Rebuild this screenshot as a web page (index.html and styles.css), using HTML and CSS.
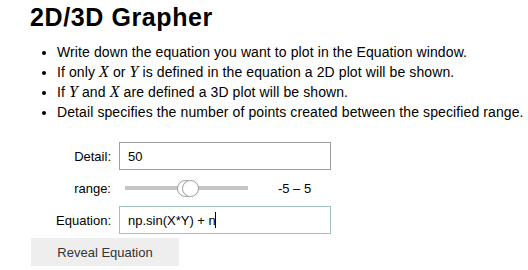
FILE: index.html
```html
<!DOCTYPE html>
<html lang="en">
<head>
    <meta charset="UTF-8">
    <meta name="viewport" content="width=device-width, initial-scale=1.0">
    <title>2D/3D Grapher</title>
    <link rel="stylesheet" href="styles.css">
</head>
<body>
    <div class="output">
        <h1 class="title">2D/3D Grapher</h1>

        <ul class="notes">
            <li>Write down the equation you want to plot in the Equation window.</li>
            <li>If only <span class="math">X</span> or <span class="math">Y</span> is defined in the equation a 2D plot will be shown.</li>
            <li>If <span class="math">Y</span> and <span class="math">X</span> are defined a 3D plot will be shown.</li>
            <li>Detail specifies the number of points created between the specified range.</li>
        </ul>

        <div class="widgets">
            <div class="widget">
                <label class="widget-label">Detail:</label>
                <div class="text-input">50</div>
            </div>

            <div class="widget">
                <label class="widget-label">range:</label>
                <div class="slider">
                    <div class="slider-track"></div>
                    <span class="handle handle-low"></span>
                    <span class="handle handle-high"></span>
                </div>
                <div class="readout">-5 – 5</div>
            </div>

            <div class="widget">
                <label class="widget-label">Equation:</label>
                <div class="text-input focused">np.sin(X*Y) + n<span class="caret"></span></div>
            </div>

            <button class="widget-button">Reveal Equation</button>
        </div>
    </div>
</body>
</html>
```

FILE: styles.css
```css
* {
    margin: 0;
    padding: 0;
    box-sizing: border-box;
}

body {
    font-family: 'Liberation Sans', Arial, sans-serif;
    background: #ffffff;
    color: #000000;
    overflow: hidden;
}

.output {
    padding: 0 0 0 29px;
}

.title {
    font-size: 25px;
    font-weight: bold;
    letter-spacing: 0.6px;
    line-height: 30px;
    padding-top: 2px;
    margin-left: 1px;
}

.notes {
    list-style: disc;
    margin: 10px 0 0 0;
    padding-left: 28px;
    font-size: 14px;
    letter-spacing: 0.1px;
    line-height: 20px;
}

.math {
    font-family: 'Liberation Serif', 'Times New Roman', serif;
    font-style: italic;
    font-size: 16px;
}

.widgets {
    display: flex;
    flex-direction: column;
    align-items: flex-start;
    margin-top: 18px;
}

.widget {
    display: flex;
    align-items: center;
    width: 300px;
    height: 28px;
    margin: 2px;
    font-size: 13px;
}

.widget-label {
    width: 80px;
    margin-right: 8px;
    text-align: right;
    white-space: nowrap;
}

.text-input {
    flex: 1;
    height: 28px;
    border: 1px solid #9e9e9e;
    padding: 0 8px;
    display: flex;
    align-items: center;
    font-size: 13px;
    color: #000;
}

.text-input.focused {
    border-color: #a3c2bd;
}

.caret {
    display: inline-block;
    width: 1px;
    height: 16px;
    background: #000;
    margin-left: -1px;
}

.slider {
    position: relative;
    width: 123px;
    height: 28px;
    margin-left: 6px;
    display: flex;
    align-items: center;
}

.slider-track {
    width: 100%;
    height: 4px;
    background: #c4c4c4;
}

.handle {
    position: absolute;
    top: 6px;
    width: 17px;
    height: 17px;
    border: 1px solid #9a9a9a;
    border-radius: 50%;
    background: #ffffff;
}

.handle-low {
    left: 52px;
}

.handle-high {
    left: 57px;
}

.readout {
    flex: 1;
    text-align: center;
    margin-left: 8px;
    padding-left: 2px;
    font-size: 13px;
}

.widget-button {
    display: block;
    width: 148px;
    height: 28px;
    margin: 2px;
    border: none;
    background: #eeeeee;
    color: #333333;
    font-family: 'Liberation Sans', Arial, sans-serif;
    font-size: 13px;
}
```
